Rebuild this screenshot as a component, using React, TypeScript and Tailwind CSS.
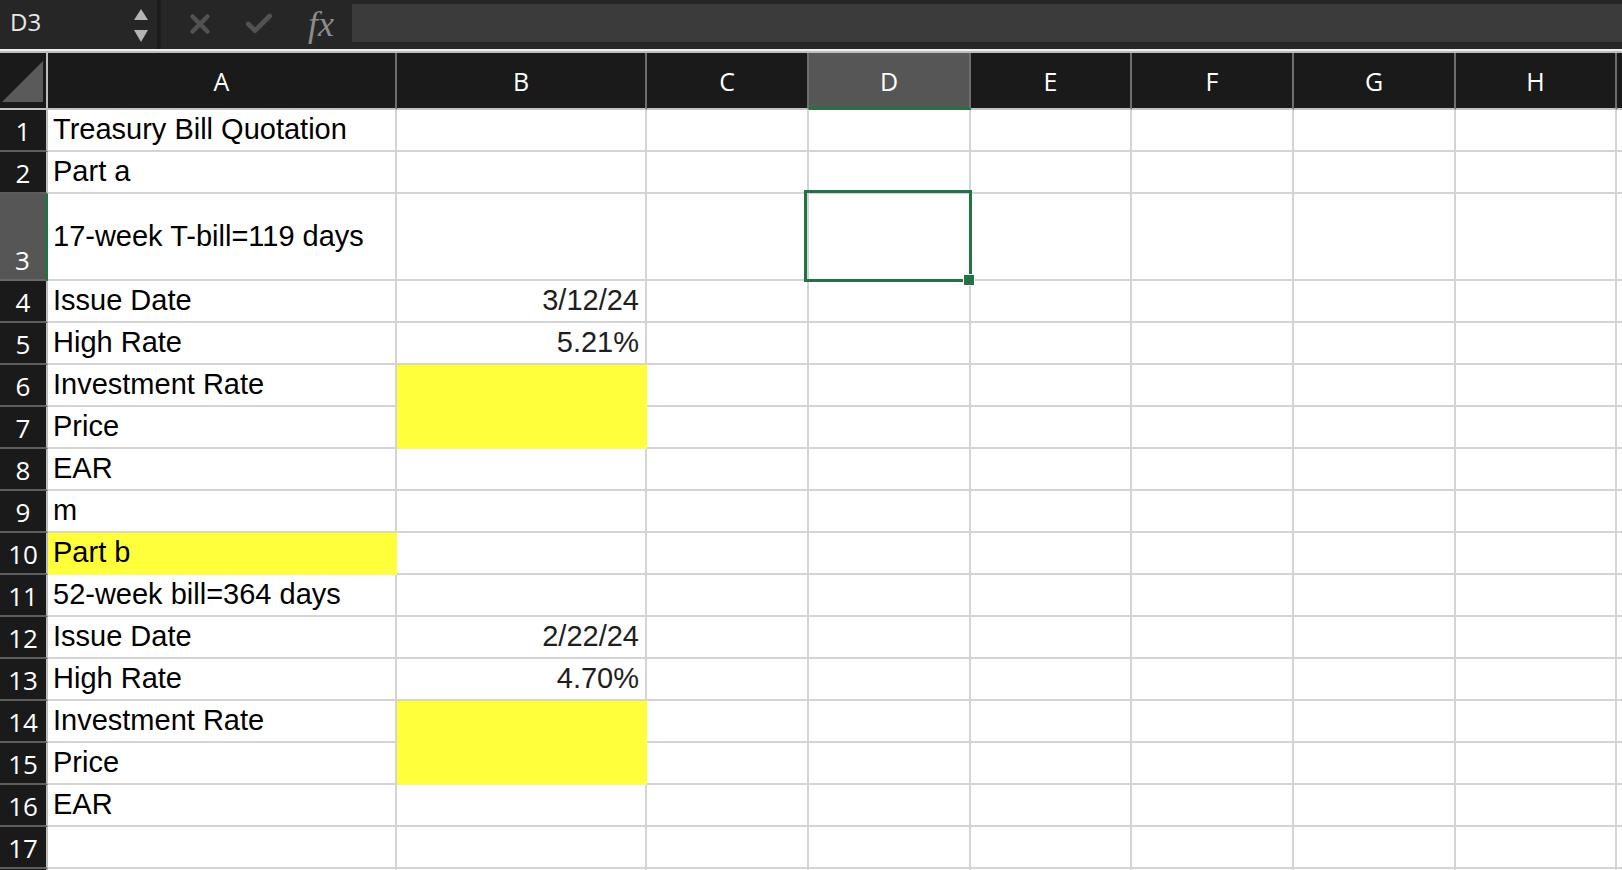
import React from "react";
import { X, Check } from "lucide-react";

type Row = { n: number; h?: string; a?: string; b?: string; aY?: boolean; bY?: boolean; hideNum?: boolean };

const rows: Row[] = [
  { n: 1, a: "Treasury Bill Quotation" },
  { n: 2, a: "Part a" },
  { n: 3, h: "h-[87px]", a: "17-week T-bill=119 days" },
  { n: 4, a: "Issue Date", b: "3/12/24" },
  { n: 5, a: "High Rate", b: "5.21%" },
  { n: 6, a: "Investment Rate", bY: true },
  { n: 7, a: "Price", bY: true },
  { n: 8, a: "EAR" },
  { n: 9, a: "m" },
  { n: 10, a: "Part b", aY: true },
  { n: 11, a: "52-week bill=364 days" },
  { n: 12, a: "Issue Date", b: "2/22/24" },
  { n: 13, a: "High Rate", b: "4.70%" },
  { n: 14, a: "Investment Rate", bY: true },
  { n: 15, a: "Price", bY: true },
  { n: 16, a: "EAR" },
  { n: 17 },
  { n: 18, hideNum: true },
];

const colWidths = ["w-[162px]", "w-[162px]", "w-[161px]", "w-[162px]", "w-[162px]", "w-[161px]"];
const extraCols = ["C", "D", "E", "F", "G", "H"];

const cellFont = { fontFamily: '"Liberation Sans", Arial, sans-serif' };
const hdrFont = { fontFamily: '"Open Sans", Lato, sans-serif' };

function Toolbar() {
  return (
    <div className="flex h-[49px] bg-[#262626]">
      <div className="flex w-[157px] items-center justify-between pb-[5px] pl-[10px] pr-[8px]">
        <span className="text-[24px] text-[#e8e8e8]" style={hdrFont}>
          D3
        </span>
        <svg width="16" height="36" viewBox="0 0 16 36" className="mt-[5px]">
          <polygon points="8,2 15,13 1,13" fill="#b4b4b4" />
          <polygon points="1,23 15,23 8,35" fill="#b4b4b4" />
        </svg>
      </div>
      <div className="w-[4px] bg-[#1c1c1c]" />
      <div className="flex items-center pb-[2px]">
        <div className="flex w-[54px] justify-end">
          <X size={30} strokeWidth={3.6} color="#525252" />
        </div>
        <div className="flex w-[60px] justify-end">
          <Check size={32} strokeWidth={3.6} color="#525252" />
        </div>
        <div className="flex w-[59px] justify-end">
          <span
            className="text-[36px] italic leading-none text-[#8c8c8c]"
            style={{ fontFamily: '"Liberation Serif", "DejaVu Serif", serif' }}
          >
            fx
          </span>
        </div>
      </div>
      <div className="ml-[18px] mt-[4px] h-[38px] flex-1 bg-[#3b3b3b]" />
    </div>
  );
}

function ColumnHeader() {
  const base =
    "flex shrink-0 items-center justify-center pt-[3px] border-r-2 border-r-[#6e6e6e] text-[25px] font-medium text-white";
  return (
    <div className="flex h-[57px]">
      <div className="relative w-[48px] shrink-0 border-r-2 border-b-2 border-r-[#bdbdbd] border-b-[#c4c4c4] bg-[#1a1a1a]">
        <svg className="absolute left-[2px] top-[8px]" width="42" height="42" viewBox="0 0 42 42">
          <polygon points="41,0 41,41 0,41" fill="#5a5a5a" />
        </svg>
      </div>
      <div className={`${base} w-[349px] border-b-2 border-b-[#c4c4c4] bg-[#1a1a1a]`} style={hdrFont}>
        A
      </div>
      <div className={`${base} w-[250px] border-b-2 border-b-[#c4c4c4] bg-[#1a1a1a]`} style={hdrFont}>
        B
      </div>
      {extraCols.map((c, i) =>
        c === "D" ? (
          <div
            key={c}
            className={`${colWidths[i]} ${base} border-b-[3px] border-b-[#217346] bg-[#565656]`}
            style={hdrFont}
          >
            {c}
          </div>
        ) : (
          <div
            key={c}
            className={`${colWidths[i]} ${base} border-b-2 border-b-[#c4c4c4] bg-[#1a1a1a]`}
            style={hdrFont}
          >
            {c}
          </div>
        )
      )}
      <div className="flex-1 border-b-2 border-b-[#c4c4c4] bg-[#1a1a1a]" />
    </div>
  );
}

function SheetRow({ r }: { r: Row }) {
  const h = r.h ?? "h-[42px]";
  const sel = r.n === 3;
  return (
    <div className={`flex ${h}`}>
      <div
        className={`flex w-[48px] shrink-0 items-end justify-center border-b-2 pb-[6px] text-[26px] font-medium leading-none text-white ${
          sel
            ? "border-r-[3px] border-r-[#217346] border-b-[#6a6a6a] bg-[#565656]"
            : "border-r-2 border-r-[#bdbdbd] border-b-[#5e5e5e] bg-[#1a1a1a]"
        }`}
        style={hdrFont}
      >
        {r.hideNum ? "" : r.n}
      </div>
      <div
        className={`flex w-[349px] shrink-0 items-center whitespace-nowrap border-r-2 border-b-2 pl-[5px] text-[29px] text-black ${
          r.aY ? "border-[#ffff3b] bg-[#ffff3b]" : "border-[#d4d4d4] bg-white"
        }`}
        style={cellFont}
      >
        {r.a}
      </div>
      <div
        className={`flex w-[250px] shrink-0 items-center justify-end whitespace-nowrap border-r-2 border-b-2 pr-[6px] text-[29px] text-[#1e1e1e] ${
          r.bY ? "border-[#ffff3b] bg-[#ffff3b]" : "border-[#d4d4d4] bg-white"
        }`}
        style={cellFont}
      >
        {r.b}
      </div>
      {extraCols.map((c, i) => (
        <div
          key={c}
          className={`${colWidths[i]} relative shrink-0 border-r-2 border-b-2 border-[#d4d4d4] bg-white ${
            sel && c === "D" ? "z-10" : ""
          }`}
        >
          {sel && c === "D" && (
            <>
              <div className="absolute -left-[5px] -top-[4px] -right-[3px] -bottom-[3px] border-[3px] border-[#217346]" />
              <div className="absolute left-[154px] top-[80px] h-[12px] w-[12px] border border-white bg-[#217346]" />
            </>
          )}
        </div>
      ))}
      <div className="flex-1 border-b-2 border-[#d4d4d4] bg-white" />
    </div>
  );
}

export default function App() {
  return (
    <div className="h-[870px] w-full overflow-hidden bg-white">
      <Toolbar />
      <div className="h-[2px] bg-[#ededed]" />
      <div className="h-[2px] bg-[#bdbdbd]" />
      <ColumnHeader />
      {rows.map((r) => (
        <SheetRow key={r.n} r={r} />
      ))}
    </div>
  );
}
